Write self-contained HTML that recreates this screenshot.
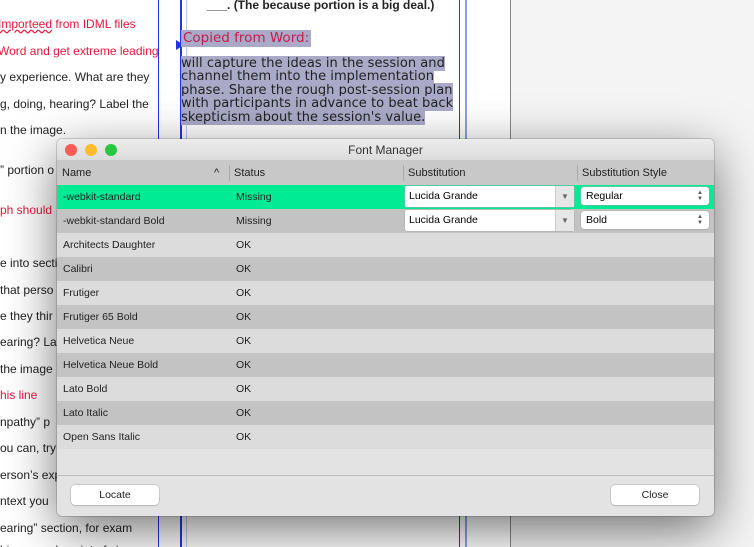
<!DOCTYPE html>
<html><head><meta charset="utf-8"><style>
*{margin:0;padding:0;box-sizing:border-box}
body{width:754px;height:547px;overflow:hidden;position:relative;background:#f4f4f4;font-family:"Liberation Sans",sans-serif}
.abs{position:absolute}
.lp{left:0;top:0;width:158px;height:547px;background:#fff;overflow:hidden}
.lp div{position:absolute;left:0;white-space:nowrap;font-size:12px;color:#222}
.r{color:#e8173c!important}
.rp{left:159px;top:0;width:352px;height:547px;background:#fff;border-right:1px solid #888}
.vl{position:absolute;top:0;height:547px;width:1px}
.sel{background:#aaaac8}
.dlg{left:57px;top:139px;width:657px;height:377px;background:#e3e3e3;border-radius:5px;box-shadow:0 14px 50px rgba(0,0,0,.55),0 0 0 1px rgba(0,0,0,.15);overflow:hidden;font-size:10.5px;color:#222}
.tb{height:22px;background:linear-gradient(#ececec,#dcdcdc);text-align:center;line-height:22px;font-size:12px;color:#333;border-bottom:1px solid #c8c8c8}
.dot{position:absolute;top:5px;width:12px;height:12px;border-radius:50%}
.hd{position:absolute;top:22px;left:0;width:657px;height:24px;background:#c8c8c8;font-size:11px;line-height:24px}
.hd span{position:absolute;top:0}
.sep{position:absolute;top:4px;width:1px;height:16px;background:#aaa}
.row{position:absolute;left:0;width:657px;height:24px;line-height:24px}
.row span{position:absolute}
.cb{position:absolute;background:#fff;border-radius:2px;box-shadow:0 0 0 .5px #aaa;height:21px;line-height:21px;padding-left:4px;font-size:10.5px;color:#000}
.pp{position:absolute;background:#fff;border-radius:3px;box-shadow:0 0 0 .5px #aaa,0 1px 1px rgba(0,0,0,.1);height:18px;line-height:18px;padding-left:5px;font-size:10.5px;color:#000;width:128px}
.btn{position:absolute;top:346px;width:88px;height:20px;background:#fff;border-radius:4px;box-shadow:0 0 0 .5px #aaa,0 1px 1px rgba(0,0,0,.15);text-align:center;line-height:20px;font-size:10.5px}
</style></head><body>
<div class="abs lp">
<div style="top:17px;left:-2px" class="r"><span style="text-decoration:underline wavy #e8173c">Importeed</span> from IDML files</div>
<div style="top:44px;left:-2px" class="r">Word and get extreme leading <span style="color:#222">.</span></div>
<div style="top:70px">y experience. What are they</div>
<div style="top:97px">g, doing, hearing? Label the</div>
<div style="top:123px">n the image.</div>
<div style="top:163px">” portion o</div>
<div style="top:203px" class="r">ph should</div>
<div style="top:256px">e into secti</div>
<div style="top:283px">that perso</div>
<div style="top:309px">e they thir</div>
<div style="top:335px">earing? La</div>
<div style="top:362px">the image</div>
<div style="top:388px" class="r">his line</div>
<div style="top:415px">npathy” p</div>
<div style="top:441px">ou can, try</div>
<div style="top:468px">erson’s exp</div>
<div style="top:494px">ntext you</div>
<div style="top:521px">earing” section, for exam</div>
<div style="top:543px">his person’s point of view</div>
</div>
<div class="abs rp"></div>
<div class="vl" style="left:158px;background:#2233ee"></div>
<div class="vl" style="left:180px;background:#2233ee;width:2px"></div>
<div class="vl" style="left:186px;background:#b8c8f0"></div>
<div class="vl" style="left:459px;background:#2233ee"></div>
<div class="vl" style="left:465px;background:#8aa0ee;width:2px"></div>
<div class="abs" style="left:176px;top:40px;width:0;height:0;border-top:5px solid transparent;border-bottom:5px solid transparent;border-left:8px solid #2233ee"></div>
<div class="abs" style="left:207px;top:-2px;font-size:12px;font-weight:bold;color:#222">___. (The because portion is a big deal.)</div>
<div class="abs sel" style="left:181px;top:30px;padding:0 2px;font-size:13.5px;color:#c0204a;font-family:'DejaVu Sans',sans-serif;line-height:17px">Copied from Word:</div>
<div class="abs" style="left:181px;top:57px;font-size:13px;line-height:13.4px;color:#222;font-family:'DejaVu Sans',sans-serif;letter-spacing:.05px">
<span class="sel">will capture the ideas in the session and</span><br><span class="sel">channel them into the implementation</span><br><span class="sel">phase. Share the rough post-session plan</span><br><span class="sel">with participants in advance to beat back</span><br><span class="sel">skepticism about the session's value.</span></div>
<div class="abs dlg">
<div class="tb">Font Manager</div>
<div class="dot" style="left:8px;background:#fc5c56"></div>
<div class="dot" style="left:28px;background:#fdbc2e"></div>
<div class="dot" style="left:48px;background:#27c840"></div>
<div class="hd"><span style="left:5px">Name</span><span style="left:157px">^</span><div class="sep" style="left:172px"></div><span style="left:177px">Status</span><div class="sep" style="left:346px"></div><span style="left:351px">Substitution</span><div class="sep" style="left:520px"></div><span style="left:525px">Substitution Style</span></div>
<div class="row" style="top:46px;background:#00eb94"><span style="left:6px">-webkit-standard</span><span style="left:179px">Missing</span></div>
<div class="row" style="top:70px;background:#c3c3c3"><span style="left:6px">-webkit-standard Bold</span><span style="left:179px">Missing</span></div>
<div class="row" style="top:94px;background:#dcdcdc"><span style="left:6px">Architects Daughter</span><span style="left:179px">OK</span></div>
<div class="row" style="top:118px;background:#c3c3c3"><span style="left:6px">Calibri</span><span style="left:179px">OK</span></div>
<div class="row" style="top:142px;background:#dcdcdc"><span style="left:6px">Frutiger</span><span style="left:179px">OK</span></div>
<div class="row" style="top:166px;background:#c3c3c3"><span style="left:6px">Frutiger 65 Bold</span><span style="left:179px">OK</span></div>
<div class="row" style="top:190px;background:#dcdcdc"><span style="left:6px">Helvetica Neue</span><span style="left:179px">OK</span></div>
<div class="row" style="top:214px;background:#c3c3c3"><span style="left:6px">Helvetica Neue Bold</span><span style="left:179px">OK</span></div>
<div class="row" style="top:238px;background:#dcdcdc"><span style="left:6px">Lato Bold</span><span style="left:179px">OK</span></div>
<div class="row" style="top:262px;background:#c3c3c3"><span style="left:6px">Lato Italic</span><span style="left:179px">OK</span></div>
<div class="row" style="top:286px;background:#dcdcdc"><span style="left:6px">Open Sans Italic</span><span style="left:179px">OK</span></div>
<div class="cb" style="left:348px;top:47px;width:169px">Lucida Grande<div style="position:absolute;right:0;top:0;width:19px;height:21px;background:#e6e6e6;border-left:1px solid #ccc;text-align:center;font-size:8px;color:#666">▼</div></div>
<div class="cb" style="left:348px;top:71px;width:169px">Lucida Grande<div style="position:absolute;right:0;top:0;width:19px;height:21px;background:#e6e6e6;border-left:1px solid #ccc;text-align:center;font-size:8px;color:#666">▼</div></div>
<div class="pp" style="left:524px;top:48px">Regular<span style="position:absolute;right:6px;top:3px;font-size:6px;line-height:6px;color:#555">▲<br>▼</span></div>
<div class="pp" style="left:524px;top:72px">Bold<span style="position:absolute;right:6px;top:3px;font-size:6px;line-height:6px;color:#555">▲<br>▼</span></div>
<div style="position:absolute;left:0;top:336px;width:657px;height:1px;background:#bdbdbd"></div>
<div class="btn" style="left:14px">Locate</div>
<div class="btn" style="left:554px">Close</div>
</div>
</body></html>
